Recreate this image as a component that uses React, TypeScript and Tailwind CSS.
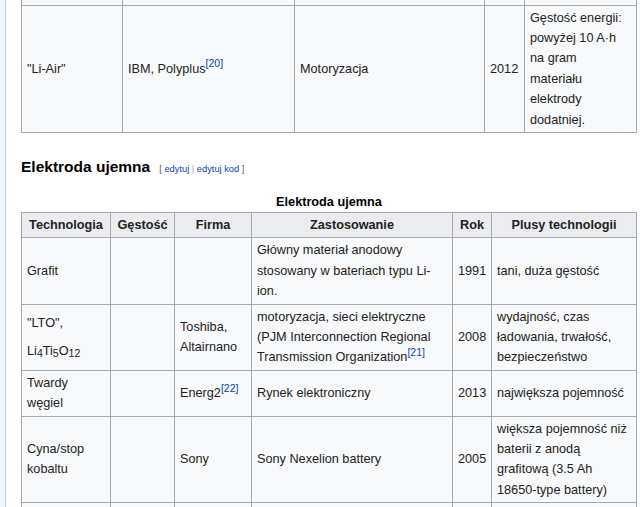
const cell = "border border-[#a2a9b1] px-[5px] py-[2px] align-middle";
const head = "border border-[#a2a9b1] bg-[#eaecf0] px-[5px] py-[2px] text-center font-bold";
const stub = "h-[5px] border-x border-b border-t-0 border-[#a2a9b1] p-0";

function Ref({ n }: { n: number }) {
  return <sup className="text-[10.5px] text-[#0645ad]">[{n}]</sup>;
}

function UpperTable() {
  return (
    <table className="w-[615px] table-fixed border-collapse bg-[#f8f9fa]">
      <colgroup>
        <col className="w-[101px]" />
        <col className="w-[172px]" />
        <col className="w-[190px]" />
        <col className="w-[40px]" />
        <col className="w-[112px]" />
      </colgroup>
      <tbody>
        <tr>
          <td className={stub} />
          <td className={stub} />
          <td className={stub} />
          <td className={stub} />
          <td className={stub} />
        </tr>
        <tr>
          <td className={cell}>"Li-Air"</td>
          <td className={cell}>
            IBM, Polyplus
            <Ref n={20} />
          </td>
          <td className={cell}>Motoryzacja</td>
          <td className={cell}>2012</td>
          <td className={cell}>
            Gęstość energii:
            <br />
            powyżej 10 A·h
            <br />
            na gram
            <br />
            materiału
            <br />
            elektrody
            <br />
            dodatniej.
          </td>
        </tr>
      </tbody>
    </table>
  );
}

function Heading() {
  return (
    <h3 className="mt-[22px] flex items-baseline text-[15.5px] leading-[24px] font-bold text-black">
      Elektroda ujemna
      <span className="ml-[9px] text-[9.3px] font-normal text-[#54595d]">
        [ <span className="text-[#0645ad]">edytuj</span>{" "}
        <span className="text-[#a2a9b1]">|</span>{" "}
        <span className="text-[#0645ad]">edytuj kod</span> ]
      </span>
    </h3>
  );
}

function LowerTable() {
  return (
    <table className="mt-[11px] w-[615px] table-fixed border-collapse bg-[#f8f9fa]">
      <caption className="bg-white font-bold leading-[20px] text-black">Elektroda ujemna</caption>
      <colgroup>
        <col className="w-[89px]" />
        <col className="w-[64px]" />
        <col className="w-[77px]" />
        <col className="w-[201px]" />
        <col className="w-[39px]" />
        <col className="w-[145px]" />
      </colgroup>
      <thead>
        <tr>
          <th className={head}>Technologia</th>
          <th className={head}>Gęstość</th>
          <th className={head}>Firma</th>
          <th className={head}>Zastosowanie</th>
          <th className={head}>Rok</th>
          <th className={head}>Plusy technologii</th>
        </tr>
      </thead>
      <tbody>
        <tr>
          <td className={cell}>Grafit</td>
          <td className={cell} />
          <td className={cell} />
          <td className={cell}>
            Główny materiał anodowy
            <br />
            stosowany w bateriach typu Li-
            <br />
            ion.
          </td>
          <td className={cell}>1991</td>
          <td className={cell}>tani, duża gęstość</td>
        </tr>
        <tr>
          <td className={cell}>
            <div>"LTO",</div>
            <div className="mt-[7px]">
              Li<sub className="text-[10.5px]">4</sub>Ti<sub className="text-[10.5px]">5</sub>O
              <sub className="text-[10.5px]">12</sub>
            </div>
          </td>
          <td className={cell} />
          <td className={cell}>
            Toshiba,
            <br />
            Altairnano
          </td>
          <td className={cell}>
            motoryzacja, sieci elektryczne
            <br />
            (PJM Interconnection Regional
            <br />
            Transmission Organization
            <Ref n={21} />
          </td>
          <td className={cell}>2008</td>
          <td className={cell}>
            wydajność, czas
            <br />
            ładowania, trwałość,
            <br />
            bezpieczeństwo
          </td>
        </tr>
        <tr>
          <td className={cell}>
            Twardy
            <br />
            węgiel
          </td>
          <td className={cell} />
          <td className={cell}>
            Energ2
            <Ref n={22} />
          </td>
          <td className={cell}>Rynek elektroniczny</td>
          <td className={cell}>2013</td>
          <td className={cell}>największa pojemność</td>
        </tr>
        <tr>
          <td className={cell}>
            Cyna/stop
            <br />
            kobaltu
          </td>
          <td className={cell} />
          <td className={cell}>Sony</td>
          <td className={cell}>Sony Nexelion battery</td>
          <td className={cell}>2005</td>
          <td className={cell}>
            większa pojemność niż
            <br />
            baterii z anodą
            <br />
            grafitową (3.5 Ah
            <br />
            18650-type battery)
          </td>
        </tr>
        <tr>
          <td className={`${cell} h-[46px]`} />
          <td className={cell} />
          <td className={cell} />
          <td className={cell} />
          <td className={cell} />
          <td className={cell} />
        </tr>
      </tbody>
    </table>
  );
}

export default function App() {
  return (
    <div className="flex h-[507px] w-[640px] overflow-hidden bg-white font-['Liberation_Sans',Arial,sans-serif] text-[12.7px] leading-[20.4px] text-[#222]">
      <div className="w-[5px] shrink-0 bg-[#f6f6f6]" />
      <main className="flex-1 border-l border-[#a7d7f9] pl-[15px]">
        <UpperTable />
        <Heading />
        <LowerTable />
      </main>
    </div>
  );
}
